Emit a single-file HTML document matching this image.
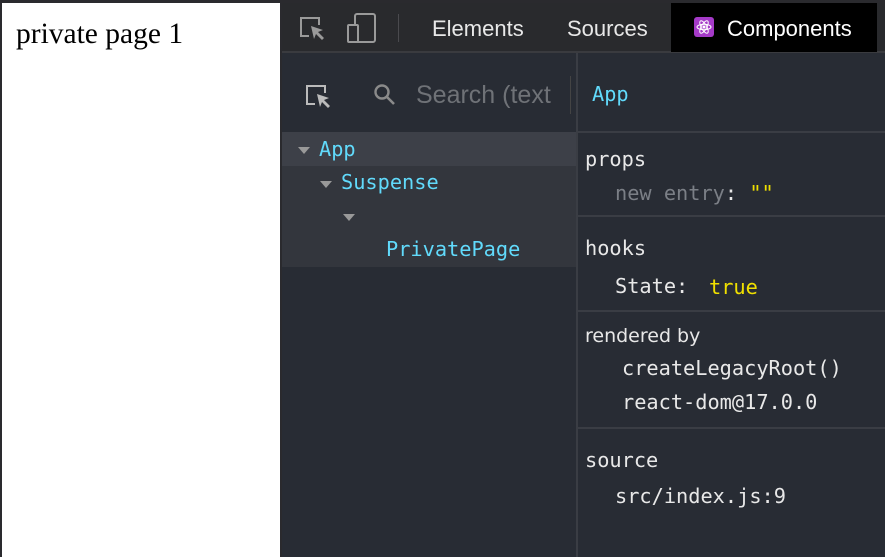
<!DOCTYPE html>
<html><head><style>
*{margin:0;padding:0;box-sizing:border-box}
body{width:885px;height:557px;overflow:hidden;background:#282c34;position:relative;font-family:"DejaVu Sans Mono",monospace}
.a{position:absolute;white-space:nowrap}
.m{font-family:"DejaVu Sans Mono",monospace;font-size:20.3px}
.s{font-family:"Liberation Sans",sans-serif}
</style></head><body>
<div class="a" style="left:0;top:0;width:885px;height:557px;background:#2a2a2e"></div>
<div class="a" style="left:2px;top:3px;width:278px;height:554px;background:#fff"></div>
<div class="a" style="left:16px;top:18px;font-family:'Liberation Serif',serif;font-size:29.5px;color:#000">private page 1</div>
<!-- top bar -->
<div class="a" style="left:282px;top:3px;width:603px;height:49px;background:#292a2d"></div>
<div class="a" style="left:282px;top:51px;width:603px;height:2px;background:#3a3b3f"></div>
<svg class="a" style="left:298px;top:14px" width="32" height="30" viewBox="0 0 32 30"><path d="M11 22H3V4h18v7" fill="none" stroke="#9a9a9a" stroke-width="2"/><path d="M13 12l12 4-5 2 6 6-2 2-6-6-2 5z" fill="#9a9a9a"/></svg>
<svg class="a" style="left:346px;top:12px" width="32" height="32" viewBox="0 0 32 32"><rect x="9" y="2" width="20" height="28" rx="2" fill="none" stroke="#9a9a9a" stroke-width="2"/><rect x="2" y="13" width="10" height="17" rx="1" fill="#2a2a2e" stroke="#9a9a9a" stroke-width="2"/></svg>
<div class="a" style="left:398px;top:14px;width:1px;height:28px;background:#4a4a4e"></div>
<div class="a s" style="left:432px;top:16px;font-size:22px;color:#e8e8e8">Elements</div>
<div class="a s" style="left:567px;top:16px;font-size:22px;color:#e8e8e8">Sources</div>
<div class="a" style="left:671px;top:3px;width:206px;height:49px;background:#000"></div>
<div class="a" style="left:694px;top:17px;width:20px;height:20px;border-radius:3px;background:#a53ac8"></div>
<svg class="a" style="left:694px;top:17px" width="20" height="20" viewBox="0 0 20 20"><g fill="none" stroke="#fff" stroke-width="1"><ellipse cx="10" cy="10" rx="7" ry="2.7"/><ellipse cx="10" cy="10" rx="7" ry="2.7" transform="rotate(60 10 10)"/><ellipse cx="10" cy="10" rx="7" ry="2.7" transform="rotate(120 10 10)"/></g><circle cx="10" cy="10" r="1.5" fill="#fff"/></svg>
<div class="a s" style="left:727px;top:16px;font-size:22px;color:#fff">Components</div>
<!-- left pane -->
<div class="a" style="left:282px;top:53px;width:603px;height:504px;background:#282c34"></div>
<svg class="a" style="left:304px;top:82px" width="32" height="30" viewBox="0 0 32 30"><path d="M11 22H3V4h18v7" fill="none" stroke="#bbb" stroke-width="2"/><path d="M13 12l12 4-5 2 6 6-2 2-6-6-2 5z" fill="#bbb"/></svg>
<svg class="a" style="left:372px;top:82px" width="26" height="26" viewBox="0 0 26 26"><circle cx="10" cy="10" r="6.5" fill="none" stroke="#8a8a8a" stroke-width="2.4"/><path d="M15 15l7 7" stroke="#8a8a8a" stroke-width="2.6"/></svg>
<div class="a s" style="left:416px;top:81px;font-size:25px;color:#6f7277;width:138px;overflow:hidden">Search (text</div>
<div class="a" style="left:570px;top:76px;width:1px;height:38px;background:#444"></div>
<div class="a" style="left:282px;top:132px;width:294px;height:34px;background:#3d4048"></div>
<div class="a" style="left:282px;top:166px;width:294px;height:101px;background:#33363d"></div>
<svg class="a" style="left:298px;top:147px" width="12" height="8"><path d="M0 0h12L6 7z" fill="#999"/></svg>
<div class="a m" style="left:319px;top:137px;color:#61dafb">App</div>
<svg class="a" style="left:320px;top:181px" width="12" height="8"><path d="M0 0h12L6 7z" fill="#999"/></svg>
<div class="a m" style="left:341px;top:170px;color:#61dafb">Suspense</div>
<svg class="a" style="left:343px;top:214px" width="12" height="8"><path d="M0 0h12L6 7z" fill="#999"/></svg>
<div class="a m" style="left:386px;top:237px;color:#61dafb">PrivatePage</div>
<!-- right pane -->
<div class="a" style="left:576px;top:53px;width:2px;height:504px;background:#3a3d44"></div>
<div class="a m" style="left:592px;top:82px;color:#61dafb">App</div>
<div class="a" style="left:578px;top:131px;width:307px;height:2px;background:#3a3d44"></div>
<div class="a m" style="left:585px;top:147px;color:#e8e8e8">props</div>
<div class="a m" style="left:615px;top:181px;color:#7b7f86">new entry<span style="color:#e8e8e8">:</span> <span style="color:#f0e000">""</span></div>
<div class="a" style="left:578px;top:215px;width:307px;height:2px;background:#3a3d44"></div>
<div class="a m" style="left:585px;top:236px;color:#e8e8e8">hooks</div>
<div class="a m" style="left:615px;top:274px;color:#e8e8e8">State:</div>
<div class="a m" style="left:709px;top:275px;color:#f0e000">true</div>
<div class="a" style="left:578px;top:310px;width:307px;height:2px;background:#3a3d44"></div>
<div class="a" style="left:585px;top:325px;color:#e8e8e8;font-family:'DejaVu Sans',sans-serif;font-size:19px">rendered by</div>
<div class="a m" style="left:622px;top:356px;color:#e8e8e8">createLegacyRoot()</div>
<div class="a m" style="left:622px;top:390px;color:#e8e8e8">react-dom@17.0.0</div>
<div class="a" style="left:578px;top:427px;width:307px;height:2px;background:#3a3d44"></div>
<div class="a m" style="left:585px;top:448px;color:#e8e8e8">source</div>
<div class="a m" style="left:615px;top:484px;color:#e8e8e8">src/index.js:9</div>
</body></html>
